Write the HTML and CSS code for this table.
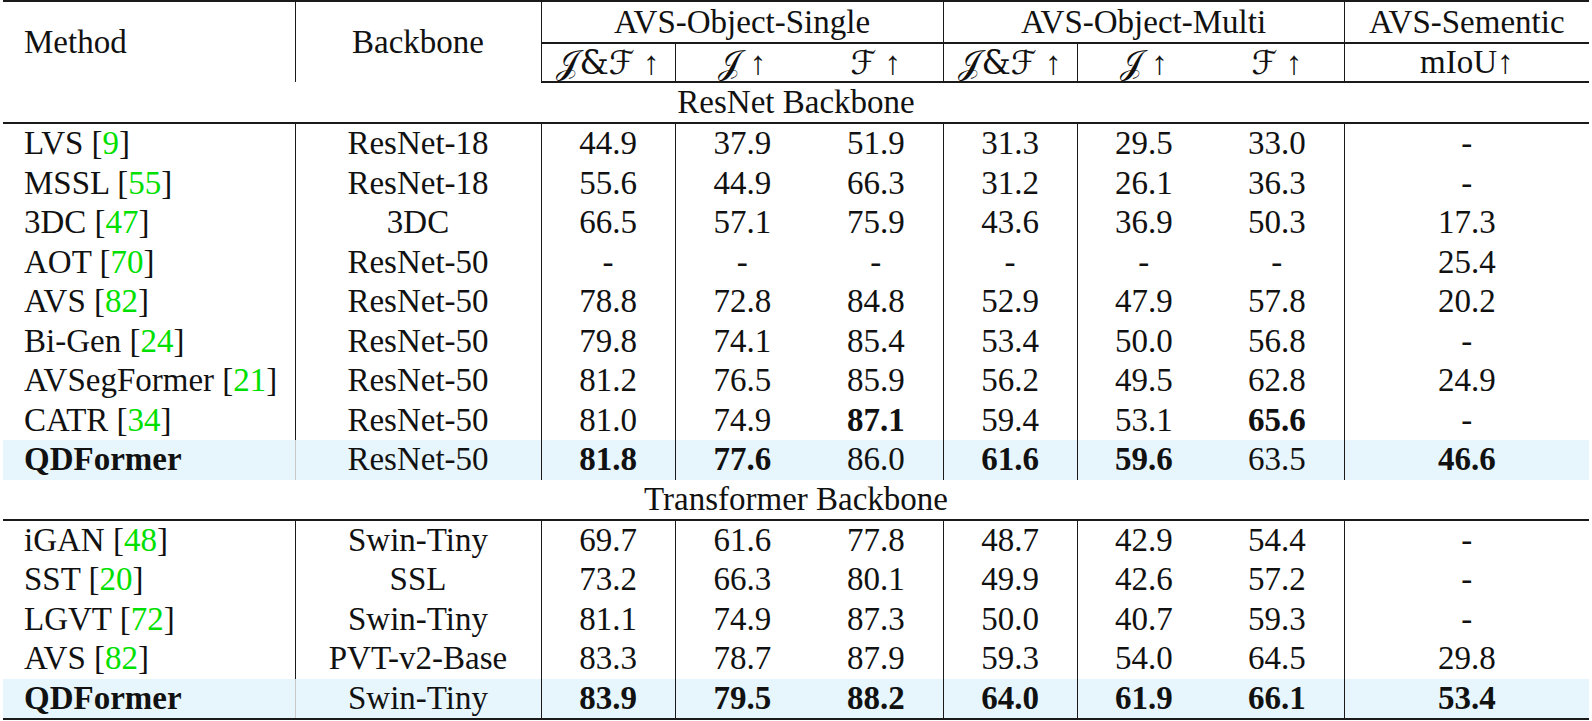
FILE: index.html
```html
<!DOCTYPE html>
<html lang="en">
<head>
    <meta charset="UTF-8">
    <meta name="viewport" content="width=device-width, initial-scale=1.0">
    <title>AVS Benchmark Results</title>
    <link rel="stylesheet" href="styles.css">
</head>
<body>
    <table class="results">
        <colgroup>
            <col class="c-method">
            <col class="c-backbone">
            <col class="c-num">
            <col class="c-num">
            <col class="c-num">
            <col class="c-num">
            <col class="c-num-narrow">
            <col class="c-num">
            <col class="c-sem">
        </colgroup>
        <thead>
            <tr class="head-top">
                <th rowspan="2" class="method sep">Method</th>
                <th rowspan="2" class="sep">Backbone</th>
                <th colspan="3" class="group sep">AVS-Object-Single</th>
                <th colspan="3" class="group sep">AVS-Object-Multi</th>
                <th class="group">AVS-Sementic</th>
            </tr>
            <tr class="head-sub">
                <th class="sep"><span class="math">𝒥&amp;ℱ</span> ↑</th>
                <th><span class="math">𝒥</span> ↑</th>
                <th class="sep"><span class="math">ℱ</span> ↑</th>
                <th class="sep"><span class="math">𝒥&amp;ℱ</span> ↑</th>
                <th><span class="math">𝒥</span> ↑</th>
                <th class="sep"><span class="math">ℱ</span> ↑</th>
                <th>mIoU↑</th>
            </tr>
        </thead>
        <tbody>
            <tr class="section"><td colspan="9">ResNet Backbone</td></tr>
            <tr>
                <td class="method sep">LVS [<span class="cite">9</span>]</td>
                <td class="sep">ResNet-18</td>
                <td class="sep">44.9</td><td>37.9</td><td class="sep">51.9</td>
                <td class="sep">31.3</td><td>29.5</td><td class="sep">33.0</td>
                <td>-</td>
            </tr>
            <tr>
                <td class="method sep">MSSL [<span class="cite">55</span>]</td>
                <td class="sep">ResNet-18</td>
                <td class="sep">55.6</td><td>44.9</td><td class="sep">66.3</td>
                <td class="sep">31.2</td><td>26.1</td><td class="sep">36.3</td>
                <td>-</td>
            </tr>
            <tr>
                <td class="method sep">3DC [<span class="cite">47</span>]</td>
                <td class="sep">3DC</td>
                <td class="sep">66.5</td><td>57.1</td><td class="sep">75.9</td>
                <td class="sep">43.6</td><td>36.9</td><td class="sep">50.3</td>
                <td>17.3</td>
            </tr>
            <tr>
                <td class="method sep">AOT [<span class="cite">70</span>]</td>
                <td class="sep">ResNet-50</td>
                <td class="sep">-</td><td>-</td><td class="sep">-</td>
                <td class="sep">-</td><td>-</td><td class="sep">-</td>
                <td>25.4</td>
            </tr>
            <tr>
                <td class="method sep">AVS [<span class="cite">82</span>]</td>
                <td class="sep">ResNet-50</td>
                <td class="sep">78.8</td><td>72.8</td><td class="sep">84.8</td>
                <td class="sep">52.9</td><td>47.9</td><td class="sep">57.8</td>
                <td>20.2</td>
            </tr>
            <tr>
                <td class="method sep">Bi-Gen [<span class="cite">24</span>]</td>
                <td class="sep">ResNet-50</td>
                <td class="sep">79.8</td><td>74.1</td><td class="sep">85.4</td>
                <td class="sep">53.4</td><td>50.0</td><td class="sep">56.8</td>
                <td>-</td>
            </tr>
            <tr>
                <td class="method sep">AVSegFormer [<span class="cite">21</span>]</td>
                <td class="sep">ResNet-50</td>
                <td class="sep">81.2</td><td>76.5</td><td class="sep">85.9</td>
                <td class="sep">56.2</td><td>49.5</td><td class="sep">62.8</td>
                <td>24.9</td>
            </tr>
            <tr>
                <td class="method sep">CATR [<span class="cite">34</span>]</td>
                <td class="sep">ResNet-50</td>
                <td class="sep">81.0</td><td>74.9</td><td class="sep best">87.1</td>
                <td class="sep">59.4</td><td>53.1</td><td class="sep best">65.6</td>
                <td>-</td>
            </tr>
            <tr class="ours">
                <td class="method sep best">QDFormer</td>
                <td class="sep">ResNet-50</td>
                <td class="sep best">81.8</td><td class="best">77.6</td><td class="sep">86.0</td>
                <td class="sep best">61.6</td><td class="best">59.6</td><td class="sep">63.5</td>
                <td class="best">46.6</td>
            </tr>
            <tr class="section"><td colspan="9">Transformer Backbone</td></tr>
            <tr>
                <td class="method sep">iGAN [<span class="cite">48</span>]</td>
                <td class="sep">Swin-Tiny</td>
                <td class="sep">69.7</td><td>61.6</td><td class="sep">77.8</td>
                <td class="sep">48.7</td><td>42.9</td><td class="sep">54.4</td>
                <td>-</td>
            </tr>
            <tr>
                <td class="method sep">SST [<span class="cite">20</span>]</td>
                <td class="sep">SSL</td>
                <td class="sep">73.2</td><td>66.3</td><td class="sep">80.1</td>
                <td class="sep">49.9</td><td>42.6</td><td class="sep">57.2</td>
                <td>-</td>
            </tr>
            <tr>
                <td class="method sep">LGVT [<span class="cite">72</span>]</td>
                <td class="sep">Swin-Tiny</td>
                <td class="sep">81.1</td><td>74.9</td><td class="sep">87.3</td>
                <td class="sep">50.0</td><td>40.7</td><td class="sep">59.3</td>
                <td>-</td>
            </tr>
            <tr>
                <td class="method sep">AVS [<span class="cite">82</span>]</td>
                <td class="sep">PVT-v2-Base</td>
                <td class="sep">83.3</td><td>78.7</td><td class="sep">87.9</td>
                <td class="sep">59.3</td><td>54.0</td><td class="sep">64.5</td>
                <td>29.8</td>
            </tr>
            <tr class="ours last">
                <td class="method sep best">QDFormer</td>
                <td class="sep">Swin-Tiny</td>
                <td class="sep best">83.9</td><td class="best">79.5</td><td class="sep best">88.2</td>
                <td class="sep best">64.0</td><td class="best">61.9</td><td class="sep best">66.1</td>
                <td class="best">53.4</td>
            </tr>
        </tbody>
    </table>
</body>
</html>
```

FILE: styles.css
```css
body {
    margin: 0;
    background-color: #ffffff;
    color: #111111;
    font-family: "Liberation Serif", "Times New Roman", serif;
}

.results {
    margin: 0 0 0 3px;
    width: 1586px;
    table-layout: fixed;
    border-collapse: collapse;
    font-size: 33px;
    border-top: 2px solid #1a1a1a;
    border-bottom: 2px solid #1a1a1a;
}

.c-method { width: 292px; }
.c-backbone { width: 246px; }
.c-num { width: 134px; }
.c-num-narrow { width: 133px; }
.c-sem { width: 245px; }

.results th,
.results td {
    padding: 0;
    text-align: center;
    vertical-align: middle;
    font-weight: normal;
    white-space: nowrap;
    line-height: 1;
}

.results td {
    height: 39.5px;
}

.results .method {
    text-align: left;
    padding-left: 21px;
}

.sep {
    border-right: 1px solid #1a1a1a;
}

.head-top th {
    height: 40px;
}

.head-top .group {
    border-bottom: 2px solid #1a1a1a;
}

.head-sub th {
    height: 37px;
    border-bottom: 2px solid #1a1a1a;
}

.math {
    font-family: "DejaVu Serif", "DejaVu Sans", serif;
}

.section td {
    height: 39px;
    border-bottom: 2px solid #1a1a1a;
}

.cite {
    color: #00e000;
}

.results td.best {
    font-weight: bold;
}

.ours td {
    background-color: #e7f6fc;
}

.ours td.method {
    border-right-color: #c9c9c9;
}
```
